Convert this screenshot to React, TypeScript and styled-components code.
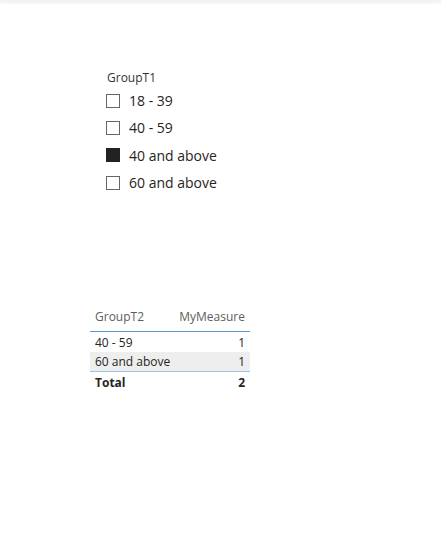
import React from "react";
import styled, { createGlobalStyle } from "styled-components";

const Global = createGlobalStyle`
  html, body { margin: 0; padding: 0; background: #fff; }
  body { font-family: "Segoe UI", "Open Sans", "Noto Sans", sans-serif; }
`;

const Page = styled.div`
  width: 441px;
  height: 545px;
  position: relative;
  overflow: hidden;
  background: #fff;
  display: flex;
  flex-direction: column;
`;

const TopBar = styled.div`
  height: 2px;
  background: #f3f3f3;
  box-shadow: 0 1px 3px rgba(0, 0, 0, 0.08);
`;

const Slicer = styled.div`
  margin: 68px 0 0 106px;
  display: flex;
  flex-direction: column;
`;

const SlicerTitle = styled.div`
  font-size: 12px;
  line-height: 16px;
  color: #333;
  padding-left: 1px;
  margin-bottom: 1px;
`;

const Item = styled.div`
  display: flex;
  align-items: center;
  height: 27.3px;
  gap: 9px;
`;

const Box = styled.div<{ $checked?: boolean }>`
  width: 12px;
  height: 12px;
  border: 1px solid #666;
  background: ${(p) => (p.$checked ? "#222" : "#fff")};
  border-color: ${(p) => (p.$checked ? "#222" : "#666")};
`;

const ItemLabel = styled.span`
  font-size: 14px;
  color: #252423;
`;

const Table = styled.div`
  margin: 105px 0 0 90px;
  width: 160px;
  display: flex;
  flex-direction: column;
  font-size: 12px;
  color: #252423;
`;

const Row = styled.div<{ $bg?: string; $border?: string; $h?: number }>`
  display: flex;
  justify-content: space-between;
  align-items: center;
  padding: 0 5px;
  height: ${(p) => p.$h ?? 20}px;
  background: ${(p) => p.$bg ?? "transparent"};
  border-bottom: ${(p) => (p.$border ? `1px solid ${p.$border}` : "none")};
  box-sizing: border-box;
`;

const HeadCell = styled.span`
  color: #605e5c;
`;

const TotalCell = styled.span`
  font-weight: 700;
  color: #252423;
`;

const items = [
  { label: "18 - 39", checked: false },
  { label: "40 - 59", checked: false },
  { label: "40 and above", checked: true },
  { label: "60 and above", checked: false },
];

export default function App() {
  return (
    <Page>
      <Global />
      <TopBar />
      <Slicer>
        <SlicerTitle>GroupT1</SlicerTitle>
        {items.map((it) => (
          <Item key={it.label}>
            <Box $checked={it.checked} />
            <ItemLabel>{it.label}</ItemLabel>
          </Item>
        ))}
      </Slicer>
      <Table>
        <Row $h={31} $border="#5b9bd5">
          <HeadCell>GroupT2</HeadCell>
          <HeadCell>MyMeasure</HeadCell>
        </Row>
        <Row>
          <span>40 - 59</span>
          <span>1</span>
        </Row>
        <Row $bg="#eeeeee" $border="#9dc3e6">
          <span>60 and above</span>
          <span>1</span>
        </Row>
        <Row>
          <TotalCell>Total</TotalCell>
          <TotalCell>2</TotalCell>
        </Row>
      </Table>
    </Page>
  );
}
